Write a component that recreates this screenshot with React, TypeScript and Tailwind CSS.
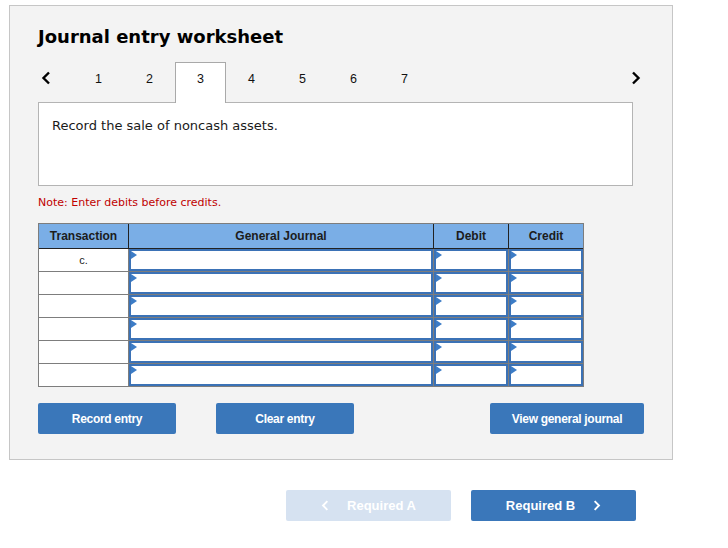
import React from 'react';

const Chevron = ({ dir, className }: { dir: 'left' | 'right'; className?: string }) => (
  <svg width="10" height="14" viewBox="0 0 10 14" className={className}>
    <polyline
      points={dir === 'left' ? '8,1.5 2.5,7 8,12.5' : '2,1.5 7.5,7 2,12.5'}
      fill="none"
      stroke="currentColor"
      strokeWidth="2.4"
    />
  </svg>
);

const InputCell = () => (
  <div className="relative h-[22px] bg-white border-2 border-[#3b72b6]">
    <svg width="6" height="8" viewBox="0 0 6 8" className="absolute left-0 top-0">
      <polygon points="0,0 6,4 0,8" fill="#3c7cc6" />
    </svg>
  </div>
);

const rows = ['c.', '', '', '', '', ''];
const tabs = [1, 2, 3, 4, 5, 6, 7];

const App: React.FC = () => {
  return (
    <div className="w-[728px] h-[548px] bg-white font-['Liberation_Sans',Arial,sans-serif] text-[#111]">
      {/* Worksheet panel */}
      <div className="ml-[9px] mt-[5px] w-[664px] border border-[#c6c6c6] bg-[#f3f3f3] pl-[28px] pr-[28px] pt-[20px] pb-[25px]">
        <h1 className="h-[22px] leading-[22px] text-[18px] font-bold font-['DejaVu_Sans',Verdana,sans-serif] text-black">
          Journal entry worksheet
        </h1>

        {/* Tabs */}
        <div className="mt-[14px] flex h-[40px] items-start">
          <div className="w-[35px] pt-[9px] pl-[3px]">
            <Chevron dir="left" className="text-black" />
          </div>
          {tabs.map((t) => (
            <div
              key={t}
              className={
                t === 3
                  ? 'relative z-10 w-[51px] h-[41px] border border-b-0 border-[#a9a9a9] bg-white pt-[8px] text-center text-[12.5px] leading-[16px]'
                  : 'w-[51px] pt-[9px] text-center text-[12.5px] leading-[16px]'
              }
            >
              {t}
            </div>
          ))}
          <div className="ml-auto mr-[3px] pt-[9px]">
            <Chevron dir="right" className="text-black" />
          </div>
        </div>

        {/* Instruction box */}
        <div className="w-[595px] h-[84px] border border-[#b4b4b4] bg-white pl-[13px] pt-[15px] text-[13px] leading-[16px] font-['DejaVu_Sans',Verdana,sans-serif] text-[#1a1a1a]">
          Record the sale of noncash assets.
        </div>

        <p className="mt-[10px] text-[11px] leading-[14px] font-['DejaVu_Sans',Verdana,sans-serif] text-[#c00000]">
          Note: Enter debits before credits.
        </p>

        {/* Journal table */}
        <div className="mt-[13px] w-[546px] border border-[#7d7d7d]">
          <div className="grid grid-cols-[89px_304px_74px_74px] gap-px bg-[#222] border-b border-[#222] text-[12px] font-bold text-[#1c1c1c]">
            <div className="h-[24px] bg-[#7aaee6] flex items-center justify-center">Transaction</div>
            <div className="h-[24px] bg-[#7aaee6] flex items-center justify-center">General Journal</div>
            <div className="h-[24px] bg-[#7aaee6] flex items-center justify-center">Debit</div>
            <div className="h-[24px] bg-[#7aaee6] flex items-center justify-center">Credit</div>
          </div>
          <div className="grid grid-cols-[89px_304px_74px_74px] gap-px bg-[#7d7d7d]">
            {rows.map((r, i) => (
              <React.Fragment key={i}>
                <div className="h-[22px] bg-white flex items-center justify-center text-[11px] text-[#222]">{r}</div>
                <InputCell />
                <InputCell />
                <InputCell />
              </React.Fragment>
            ))}
          </div>
        </div>

        {/* Actions */}
        <div className="mt-[16px] flex items-center text-[12px] font-bold tracking-[-0.3px] text-white">
          <button className="w-[138px] h-[31px] rounded-[2px] bg-[#3a77ba]">Record entry</button>
          <button className="ml-[40px] w-[138px] h-[31px] rounded-[2px] bg-[#3a77ba]">Clear entry</button>
          <button className="ml-auto w-[154px] h-[31px] rounded-[2px] bg-[#3a77ba]">View general journal</button>
        </div>
      </div>

      {/* Bottom navigation */}
      <div className="mt-[30px] ml-[286px] flex gap-[20px] text-[13px] font-bold text-white">
        <button className="flex w-[165px] h-[31px] items-center justify-center gap-[18px] rounded-[2px] bg-[#d6e2f1]">
          <Chevron dir="left" className="w-[8px] h-[11px]" />
          <span>Required A</span>
        </button>
        <button className="flex w-[165px] h-[31px] items-center justify-center gap-[18px] rounded-[2px] bg-[#3a77ba]">
          <span>Required B</span>
          <Chevron dir="right" className="w-[8px] h-[11px]" />
        </button>
      </div>
    </div>
  );
};

export default App;
